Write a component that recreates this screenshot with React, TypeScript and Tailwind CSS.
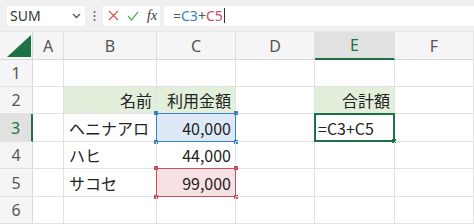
import React from "react";

const cols = ["A", "B", "C", "D", "E", "F"];
const rowHeights = [27, 27, 28, 27, 28, 27];

function Corner({ pos, color }: { pos: string; color: string }) {
  return <span className={`absolute w-[4px] h-[4px] ${pos}`} style={{ background: color }} />;
}

export default function App() {
  const font = { fontFamily: '"Noto Sans CJK JP", "Noto Sans", sans-serif' };
  const cell = (r: number, c: number) => {
    // r: 1..6, c: 0..5 (A..F)
    const base = "relative border-r border-b border-[#e1e1e1] flex items-center text-[16px] text-[#222] overflow-visible";
    let content: React.ReactNode = null;
    let extra = "";
    let overlay: React.ReactNode = null;
    if (r === 2 && c === 1) { extra = "bg-[#e2efda] justify-end pr-[4px]"; content = "名前"; }
    if (r === 2 && c === 2) { extra = "bg-[#e2efda] justify-end pr-[4px]"; content = "利用金額"; }
    if (r === 2 && c === 4) { extra = "bg-[#e2efda] justify-end pr-[4px]"; content = "合計額"; }
    if (r === 3 && c === 1) { extra = "pl-[5px]"; content = "ヘニナアロ"; }
    if (r === 4 && c === 1) { extra = "pl-[5px]"; content = "ハヒ"; }
    if (r === 5 && c === 1) { extra = "pl-[5px]"; content = "サコセ"; }
    if (r === 4 && c === 2) { extra = "justify-end pr-[4px]"; content = "44,000"; }
    if (r === 3 && c === 2) {
      extra = "bg-[#dde9f7] justify-end pr-[4px]";
      content = "40,000";
      overlay = (
        <span className="absolute left-[-1px] top-[-1px] right-[-1px] bottom-[-1px] border border-[#3b7fc4] pointer-events-none">
          <Corner pos="left-[-3px] top-[-3px]" color="#3b7fc4" />
          <Corner pos="right-[-3px] top-[-3px]" color="#3b7fc4" />
          <Corner pos="left-[-3px] bottom-[-3px]" color="#3b7fc4" />
          <Corner pos="right-[-3px] bottom-[-3px]" color="#3b7fc4" />
        </span>
      );
    }
    if (r === 5 && c === 2) {
      extra = "bg-[#f8e1e2] justify-end pr-[4px]";
      content = "99,000";
      overlay = (
        <span className="absolute left-[-1px] top-[-1px] right-[-1px] bottom-[-1px] border border-[#c4505a] pointer-events-none">
          <Corner pos="left-[-3px] top-[-3px]" color="#c4505a" />
          <Corner pos="right-[-3px] top-[-3px]" color="#c4505a" />
          <Corner pos="left-[-3px] bottom-[-3px]" color="#c4505a" />
          <Corner pos="right-[-3px] bottom-[-3px]" color="#c4505a" />
        </span>
      );
    }
    if (r === 3 && c === 4) {
      extra = "pl-[3px]";
      content = "=C3+C5";
      overlay = (
        <span className="absolute left-[-1px] top-[-1px] right-[-1px] bottom-[-1px] border-[2px] border-[#1e7145] pointer-events-none">
          <Corner pos="right-[-3px] bottom-[-3px]" color="#1e7145" />
        </span>
      );
    }
    return (
      <div key={`${r}-${c}`} className={`${base} ${extra}`}>
        <span className="relative z-0 leading-none">{content}</span>
        {overlay}
      </div>
    );
  };

  return (
    <div className="w-[474px] h-[224px] overflow-hidden bg-white" style={font}>
      {/* Formula bar */}
      <div className="h-[32px] bg-[#f0f0f0] flex items-center pl-[7px] gap-0 border-b border-[#e6e6e6]">
        <div className="w-[78px] h-[20px] bg-white rounded-[3px] flex items-center justify-between pl-[3px] pr-[4px]">
          <span className="text-[14px] text-[#333] leading-none" style={{ fontFamily: '"Noto Sans", sans-serif' }}>SUM</span>
          <svg width="9" height="6" viewBox="0 0 9 6"><path d="M1 1l3.5 3.5L8 1" stroke="#555" strokeWidth="1.3" fill="none" /></svg>
        </div>
        <div className="w-[18px] flex justify-center">
          <svg width="3" height="12" viewBox="0 0 3 12"><circle cx="1.5" cy="2" r="1.1" fill="#666" /><circle cx="1.5" cy="6" r="1.1" fill="#666" /><circle cx="1.5" cy="10" r="1.1" fill="#666" /></svg>
        </div>
        <div className="w-[57px] h-[20px] bg-white rounded-[3px] flex items-center pl-[5px] gap-[8px]">
          <svg width="11" height="11" viewBox="0 0 11 11"><path d="M1 1l9 9M10 1l-9 9" stroke="#d9534f" strokeWidth="1.2" /></svg>
          <svg width="12" height="10" viewBox="0 0 12 10"><path d="M1 5l3.5 4L11 1" stroke="#4caf50" strokeWidth="1.2" fill="none" /></svg>
          <span className="text-[14px] italic text-[#333] leading-none" style={{ fontFamily: '"Liberation Serif", serif' }}>fx</span>
        </div>
        <div className="ml-[4px] flex-1 h-[20px] bg-white rounded-l-[3px] flex items-center pl-[9px] text-[14px] leading-none" style={{ fontFamily: '"Noto Sans", sans-serif' }}>
          <span className="text-[#555]">=</span>
          <span className="text-[#3b7fc4]">C3</span>
          <span className="text-[#555]">+</span>
          <span className="text-[#c4505a]">C5</span>
          <span className="inline-block w-[1px] h-[15px] bg-[#333] ml-[1px]" />
        </div>
      </div>
      {/* Grid */}
      <div className="grid grid-cols-[33px_31px_93px_79px_79px_80px_79px]" style={{ gridTemplateRows: `28px ${rowHeights.map((h) => h + "px").join(" ")}` }}>
        <div className="relative bg-[#f5f5f5] border-r border-b border-[#d9d9d9]">
          <svg className="absolute right-[1px] bottom-[2px]" width="24" height="22" viewBox="0 0 24 22"><path d="M24 0L24 22L0 22Z" fill="#1e7145" /></svg>
        </div>
        {cols.map((c, i) => (
          <div
            key={c}
            className={`flex items-center justify-center text-[16px] leading-none border-r border-[#e1e1e1] ${i === 4 ? "bg-[#e1e1e1] text-[#1e7145] border-b-[2px] border-b-[#1e7145]" : "bg-[#f5f5f5] text-[#555] border-b border-b-[#d9d9d9]"}`}
            style={{ fontFamily: '"Noto Sans", sans-serif' }}
          >
            {c}
          </div>
        ))}
        {rowHeights.map((_, ri) => {
          const r = ri + 1;
          return (
            <React.Fragment key={r}>
              <div
                className={`flex items-center justify-center text-[16px] leading-none border-b border-[#e1e1e1] ${r === 3 ? "bg-[#e1e1e1] text-[#1e7145] border-r-[2px] border-r-[#1e7145]" : "bg-[#f5f5f5] text-[#555] border-r border-r-[#d9d9d9]"}`}
                style={{ fontFamily: '"Noto Sans", sans-serif' }}
              >
                {r}
              </div>
              {cols.map((_, ci) => cell(r, ci))}
            </React.Fragment>
          );
        })}
      </div>
    </div>
  );
}
